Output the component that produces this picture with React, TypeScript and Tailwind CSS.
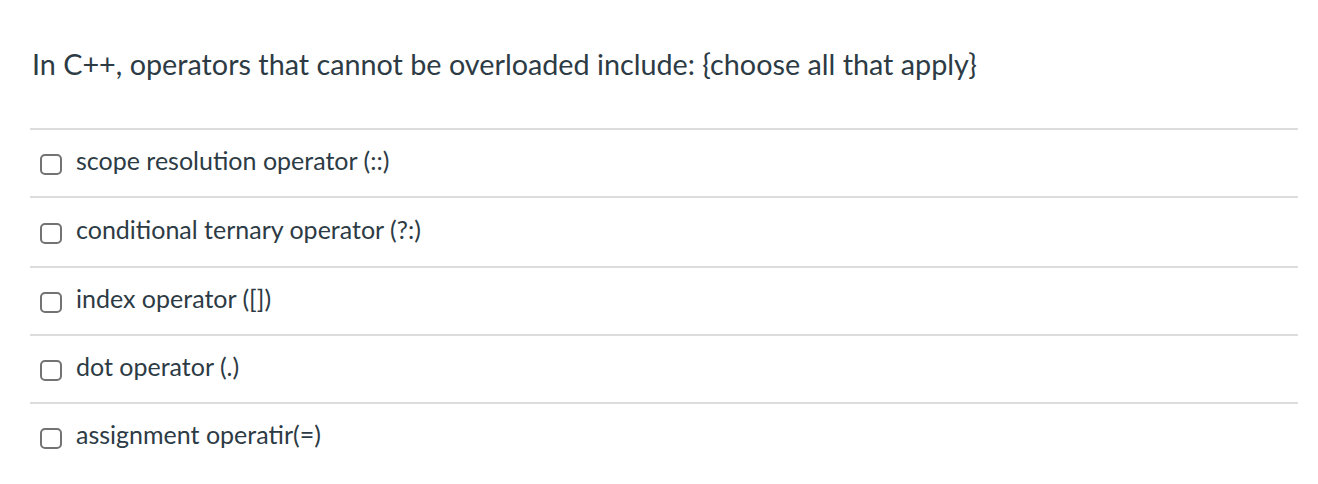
import React from "react";

const options = [
  { t: "scope resolution operator (::)", h: "h-[68px]" },
  { t: "conditional ternary operator (?:)", h: "h-[70px]" },
  { t: "index operator ([])", h: "h-[68px]" },
  { t: "dot operator (.)", h: "h-[68px]" },
  { t: "assignment operatir(=)", h: "h-[68px]" },
];

export default function App() {
  return (
    <div
      className="w-[1318px] h-[484px] bg-white text-[#2d3b45]"
      style={{ fontFamily: "Lato, 'Noto Sans', sans-serif" }}
    >
      <div className="pl-[30px] pr-[20px] pt-[47px]">
        <h1 className="h-[35px] text-[28.75px] leading-[1.2] font-normal pl-[2px]">
          In C++, operators that cannot be overloaded include: {"{choose all that apply}"}
        </h1>
        <div className="mt-[46px]">
          {options.map((o, i) => (
            <div
              key={i}
              className={`${o.h} border-t-2 border-[#dcdcdc] flex items-center pl-[10px]`}
            >
              <span className="w-[22px] h-[21px] border-2 border-[#737373] rounded-[5px] shrink-0 mt-[2px]" />
              <span className="ml-[14px] text-[25px] leading-none mb-[6px]">{o.t}</span>
            </div>
          ))}
        </div>
      </div>
    </div>
  );
}
